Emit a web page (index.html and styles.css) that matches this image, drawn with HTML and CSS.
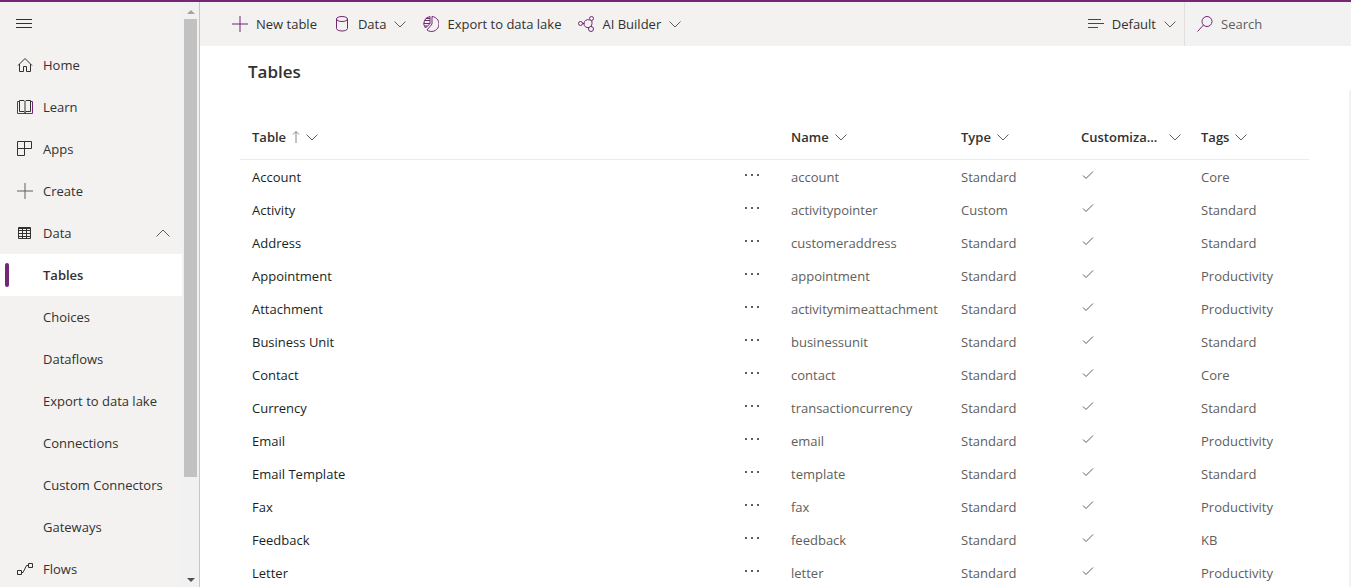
FILE: index.html
```html
<!DOCTYPE html>
<html lang="en">
  <head>
    <meta charset="UTF-8" />
    <meta name="viewport" content="width=device-width, initial-scale=1.0" />
    <title>Tables</title>
    <link rel="stylesheet" href="styles.css">
  </head>
  <body>
    <svg class="sprite" aria-hidden="true">
      <symbol id="chevron" viewBox="0 0 12 12"><path d="M.5 3.500 6 9l5.500-5.500" /></symbol>
      <symbol id="check" viewBox="0 0 12 12"><path d="M1 6.500 4 9.500l7-7" /></symbol>
      <symbol id="dots" viewBox="0 0 16 4"><path d="M1 1h2v2H1zM7 1h2v2H7zM13 1h2v2h-2z" /></symbol>
      <symbol id="plus" viewBox="0 0 16 16"><path d="M8 0v16M0 8h16" /></symbol>
    </svg>

    <div class="app">
      <aside class="sidebar">
        <nav class="nav">
          <button class="menu-button" aria-label="Menu">
            <svg class="icon" viewBox="0 0 16 16"><path d="M0 3.500h16M0 7.500h16M0 11.500h16" /></svg>
          </button>
          <a class="nav-item" href="#">
            <svg class="icon" viewBox="0 0 16 16"><path d="M1 8.500 8 1.500l7 7M2.500 7v7.500h4V9.500h3v5h4V7" /></svg>
            Home
          </a>
          <a class="nav-item" href="#">
            <svg class="icon" viewBox="0 0 16 16"><path class="accent" d="M2.500 2.500h-2v12h15v-12h-2" /><path d="M2.500 1.500H7l1 1 1-1h4.500v11H9l-1 1-1-1H2.500zM8 2.500v12" /></svg>
            Learn
          </a>
          <a class="nav-item" href="#">
            <svg class="icon" viewBox="0 0 16 16"><path d="M.5.5h14v7H.5zM.5 7.500v7h7V.5" /></svg>
            Apps
          </a>
          <a class="nav-item" href="#">
            <svg class="icon icon-gray"><use href="#plus" /></svg>
            Create
          </a>
          <button class="nav-item">
            <svg class="icon" viewBox="0 0 16 16"><path d="M1.500 2.500h12v11h-12zM1.500 3.500h12M1.500 5.500h12M1.500 8.500h12M1.500 11.500h12M5.500 4v9M9.500 4v9" /></svg>
            Data
            <svg class="nav-chevron" viewBox="0 0 14 8"><path d="M.5 7.500 7 1l6.500 6.500" /></svg>
          </button>
          <a class="nav-item sub active" href="#">Tables</a>
          <a class="nav-item sub" href="#">Choices</a>
          <a class="nav-item sub" href="#">Dataflows</a>
          <a class="nav-item sub" href="#">Export to data lake</a>
          <a class="nav-item sub" href="#">Connections</a>
          <a class="nav-item sub" href="#">Custom Connectors</a>
          <a class="nav-item sub" href="#">Gateways</a>
          <a class="nav-item" href="#">
            <svg class="icon" viewBox="0 0 16 16"><path d="M.5 9.500h4v4h-4zM11.500 2.500h4v4h-4zM4.500 11.500h1.500l3.500-7h2" /></svg>
            Flows
          </a>
        </nav>
        <div class="scrollbar">
          <span class="arrow-up"></span>
          <span class="thumb"></span>
          <span class="arrow-down"></span>
        </div>
      </aside>

      <main class="main">
        <div class="command-bar">
          <div class="commands">
            <button class="command">
              <svg class="icon accent"><use href="#plus" /></svg>
              New table
            </button>
            <button class="command">
              <svg class="icon accent" viewBox="0 0 16 16"><ellipse cx="8" cy="3" rx="5.500" ry="2.500" /><path d="M2.500 3v9.500c0 1.400 2.500 2.500 5.500 2.500s5.500-1.100 5.500-2.500V3" /></svg>
              Data
              <svg class="chevron"><use href="#chevron" /></svg>
            </button>
            <button class="command">
              <svg class="icon accent" viewBox="0 0 16 16"><path d="M9 .5a7.500 7.500 0 1 1-5 13.500L9 8zM7 .5v7L2.500 12A7 7 0 0 1 7 .5zM1.500 4.500H7M.5 7.500H7M1.500 10h3M3 2.500h4" /></svg>
              Export to data lake
            </button>
            <button class="command">
              <svg class="icon accent" viewBox="0 0 16 16"><circle cx="2.500" cy="7.500" r="2" /><circle cx="13.500" cy="2.500" r="2" /><circle cx="13" cy="13" r="2.500" /><path d="M11.500 4A4 4 0 1 0 11 11.500M13.500 4.500c1 2 .5 4-.5 6M4.500 7.500h2" /></svg>
              AI Builder
              <svg class="chevron"><use href="#chevron" /></svg>
            </button>
          </div>
          <button class="command view">
            <svg class="icon accent" viewBox="0 0 16 16"><path d="M0 3.500h13M0 7.500h16M0 11.500h10" /></svg>
            Default
            <svg class="chevron"><use href="#chevron" /></svg>
          </button>
          <label class="search">
            <svg class="icon accent" viewBox="0 0 16 16"><circle cx="10" cy="5.500" r="5" /><path d="M6.500 9 .5 15.500" /></svg>
            <input class="search-input" type="text" placeholder="Search" aria-label="Search" />
          </label>
        </div>

        <h1 class="page-title">Tables</h1>

        <div class="content">
          <table class="grid">
            <colgroup>
              <col />
              <col class="col-menu" />
              <col class="col-name" />
              <col class="col-small" />
              <col class="col-small" />
              <col class="col-small" />
            </colgroup>
            <thead>
              <tr>
                <th colspan="2">
                  <button class="sort">
                    Table
                    <svg class="sort-arrow" viewBox="0 0 8 12"><path d="M4 .5V12M1 3.500l3-3 3 3" /></svg>
                    <svg class="chevron"><use href="#chevron" /></svg>
                  </button>
                </th>
                <th><button class="sort">Name <svg class="chevron"><use href="#chevron" /></svg></button></th>
                <th><button class="sort">Type <svg class="chevron"><use href="#chevron" /></svg></button></th>
                <th><button class="sort"><span class="sort-label">Customiza...</span><svg class="chevron"><use href="#chevron" /></svg></button></th>
                <th><button class="sort">Tags <svg class="chevron"><use href="#chevron" /></svg></button></th>
              </tr>
            </thead>
            <tbody>
              <tr>
                <td><a class="table-link" href="#">Account</a></td>
                <td><button class="more" aria-label="More"><svg class="dots"><use href="#dots" /></svg></button></td>
                <td>account</td>
                <td>Standard</td>
                <td><svg class="check"><use href="#check" /></svg></td>
                <td>Core</td>
              </tr>
              <tr>
                <td><a class="table-link" href="#">Activity</a></td>
                <td><button class="more" aria-label="More"><svg class="dots"><use href="#dots" /></svg></button></td>
                <td>activitypointer</td>
                <td>Custom</td>
                <td><svg class="check"><use href="#check" /></svg></td>
                <td>Standard</td>
              </tr>
              <tr>
                <td><a class="table-link" href="#">Address</a></td>
                <td><button class="more" aria-label="More"><svg class="dots"><use href="#dots" /></svg></button></td>
                <td>customeraddress</td>
                <td>Standard</td>
                <td><svg class="check"><use href="#check" /></svg></td>
                <td>Standard</td>
              </tr>
              <tr>
                <td><a class="table-link" href="#">Appointment</a></td>
                <td><button class="more" aria-label="More"><svg class="dots"><use href="#dots" /></svg></button></td>
                <td>appointment</td>
                <td>Standard</td>
                <td><svg class="check"><use href="#check" /></svg></td>
                <td>Productivity</td>
              </tr>
              <tr>
                <td><a class="table-link" href="#">Attachment</a></td>
                <td><button class="more" aria-label="More"><svg class="dots"><use href="#dots" /></svg></button></td>
                <td>activitymimeattachment</td>
                <td>Standard</td>
                <td><svg class="check"><use href="#check" /></svg></td>
                <td>Productivity</td>
              </tr>
              <tr>
                <td><a class="table-link" href="#">Business Unit</a></td>
                <td><button class="more" aria-label="More"><svg class="dots"><use href="#dots" /></svg></button></td>
                <td>businessunit</td>
                <td>Standard</td>
                <td><svg class="check"><use href="#check" /></svg></td>
                <td>Standard</td>
              </tr>
              <tr>
                <td><a class="table-link" href="#">Contact</a></td>
                <td><button class="more" aria-label="More"><svg class="dots"><use href="#dots" /></svg></button></td>
                <td>contact</td>
                <td>Standard</td>
                <td><svg class="check"><use href="#check" /></svg></td>
                <td>Core</td>
              </tr>
              <tr>
                <td><a class="table-link" href="#">Currency</a></td>
                <td><button class="more" aria-label="More"><svg class="dots"><use href="#dots" /></svg></button></td>
                <td>transactioncurrency</td>
                <td>Standard</td>
                <td><svg class="check"><use href="#check" /></svg></td>
                <td>Standard</td>
              </tr>
              <tr>
                <td><a class="table-link" href="#">Email</a></td>
                <td><button class="more" aria-label="More"><svg class="dots"><use href="#dots" /></svg></button></td>
                <td>email</td>
                <td>Standard</td>
                <td><svg class="check"><use href="#check" /></svg></td>
                <td>Productivity</td>
              </tr>
              <tr>
                <td><a class="table-link" href="#">Email Template</a></td>
                <td><button class="more" aria-label="More"><svg class="dots"><use href="#dots" /></svg></button></td>
                <td>template</td>
                <td>Standard</td>
                <td><svg class="check"><use href="#check" /></svg></td>
                <td>Standard</td>
              </tr>
              <tr>
                <td><a class="table-link" href="#">Fax</a></td>
                <td><button class="more" aria-label="More"><svg class="dots"><use href="#dots" /></svg></button></td>
                <td>fax</td>
                <td>Standard</td>
                <td><svg class="check"><use href="#check" /></svg></td>
                <td>Productivity</td>
              </tr>
              <tr>
                <td><a class="table-link" href="#">Feedback</a></td>
                <td><button class="more" aria-label="More"><svg class="dots"><use href="#dots" /></svg></button></td>
                <td>feedback</td>
                <td>Standard</td>
                <td><svg class="check"><use href="#check" /></svg></td>
                <td>KB</td>
              </tr>
              <tr>
                <td><a class="table-link" href="#">Letter</a></td>
                <td><button class="more" aria-label="More"><svg class="dots"><use href="#dots" /></svg></button></td>
                <td>letter</td>
                <td>Standard</td>
                <td><svg class="check"><use href="#check" /></svg></td>
                <td>Productivity</td>
              </tr>
            </tbody>
          </table>
        </div>
      </main>
    </div>
  </body>
</html>
```

FILE: styles.css
```css
* {
  box-sizing: border-box;
}

body {
  margin: 0;
  font-family: "Open Sans", "Noto Sans", sans-serif;
  font-size: 13px;
  line-height: 18px;
  color: #323130;
  background-color: #fff;
}

button,
input {
  font: inherit;
  color: inherit;
  background: none;
  border: none;
  padding: 0;
  margin: 0;
}

button {
  cursor: pointer;
}

a {
  color: inherit;
  text-decoration: none;
}

svg {
  flex: none;
  fill: none;
  stroke: #323130;
}

.sprite {
  display: none;
}

.app {
  display: flex;
  height: 100vh;
  border-top: 2px solid #742774;
  overflow: hidden;
}

/* sidebar */
.sidebar {
  display: flex;
  flex: none;
  width: 200px;
  background-color: #f3f2f1;
  border-right: 1px solid #c8c6c4;
  overflow: hidden;
}

.nav {
  flex: 1;
}

.menu-button {
  display: flex;
  align-items: center;
  height: 42px;
  padding: 2px 0 0 16px;
}

.nav-item {
  display: flex;
  align-items: center;
  gap: 10px;
  width: 100%;
  height: 42px;
  padding: 0 12px 0 17px;
  text-align: left;
}

.nav-item.sub {
  padding-left: 43px;
}

.nav-item.active {
  position: relative;
  background-color: #fff;
  font-weight: 600;
}

.nav-item.active::before {
  content: "";
  position: absolute;
  left: 5px;
  top: 9px;
  width: 4px;
  height: 24px;
  border-radius: 2px;
  background-color: #742774;
}

.nav-chevron {
  width: 14px;
  height: 8px;
  margin-left: auto;
  stroke: #605e5c;
}

.icon {
  width: 16px;
  height: 16px;
}

.icon-gray {
  stroke: #605e5c;
}

.accent {
  stroke: #742774;
}

.scrollbar {
  display: flex;
  flex-direction: column;
  align-items: center;
  width: 17px;
  padding: 8px 2px 5px;
  background-color: #f1f1f1;
}

.arrow-up,
.arrow-down {
  border: 4px solid transparent;
}

.arrow-up {
  border-top: none;
  border-bottom-color: #a3a3a3;
}

.arrow-down {
  border-bottom: none;
  border-top-color: #505050;
  margin-top: auto;
}

.thumb {
  width: 13px;
  height: 80%;
  margin-top: 5px;
  margin-bottom: auto;
  background-color: #c1c1c1;
}

/* command bar */
.main {
  display: flex;
  flex-direction: column;
  flex: 1;
  min-width: 0;
}

.command-bar {
  display: flex;
  flex: none;
  height: 44px;
  background-color: #f3f2f1;
}

.commands {
  display: flex;
  flex: 1;
  gap: 17px;
  padding-left: 32px;
}

.command {
  display: flex;
  align-items: center;
  gap: 8px;
}

.view {
  padding-right: 8px;
}

.chevron {
  width: 12px;
  height: 12px;
  stroke: #605e5c;
}

.search {
  display: flex;
  align-items: center;
  gap: 8px;
  width: 167px;
  padding-left: 12px;
  background-color: #f3f2f3;
  border-left: 1px solid #e1dfdd;
}

.search-input {
  width: 100%;
  min-width: 0;
  outline: none;
}

.search-input::placeholder {
  color: #605e5c;
  opacity: 1;
}

.page-title {
  flex: none;
  height: 44px;
  margin: 0;
  padding: 14px 48px 0;
  font-size: 17px;
  line-height: 24px;
  font-weight: 600;
}

/* table list */
.content {
  flex: 1;
  min-height: 0;
  padding: 25px 40px 0;
  border-right: 2px solid #f3f2f1;
}

.grid {
  width: 100%;
  table-layout: fixed;
  border-collapse: separate;
  border-spacing: 0;
  color: #605e5c;
}

.col-menu {
  width: 43px;
}

.col-name {
  width: 170px;
}

.col-small {
  width: 120px;
}

.grid th {
  height: 45px;
  padding: 0 0 0 12px;
  color: #323130;
  border-bottom: 1px solid #edebe9;
}

.grid td {
  height: 33px;
  padding: 0 0 0 12px;
}

.sort {
  display: flex;
  align-items: center;
  gap: 6px;
  font-weight: 600;
}

.sort-label {
  min-width: 82px;
  text-align: left;
}

.sort-arrow {
  width: 8px;
  height: 12px;
  stroke: #8a8886;
}

.table-link {
  color: #201f1e;
}

.more {
  display: block;
  margin-left: -4px;
}

.dots {
  display: block;
  width: 16px;
  height: 4px;
  margin-bottom: 4px;
  fill: #605e5c;
  stroke: none;
}

.check {
  display: block;
  width: 12px;
  height: 12px;
  margin: 0 0 4px 1px;
  stroke: #605e5c;
}
```
